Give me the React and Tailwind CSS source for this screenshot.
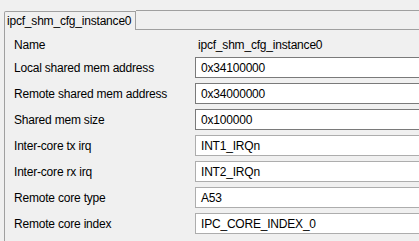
const rows = [
  { label: "Local shared mem address", value: "0x34100000", edit: true },
  { label: "Remote shared mem address", value: "0x34000000", edit: true },
  { label: "Shared mem size", value: "0x100000", edit: true },
  { label: "Inter-core tx irq", value: "INT1_IRQn" },
  { label: "Inter-core rx irq", value: "INT2_IRQn" },
  { label: "Remote core type", value: "A53" },
  { label: "Remote core index", value: "IPC_CORE_INDEX_0" },
];

export default function App() {
  return (
    <div className="w-[419px] h-[241px] overflow-hidden bg-[#f0f0f0] text-[12px] tracking-[-0.2px] text-black font-['Liberation_Sans',Arial,sans-serif]">
      <div className="pt-[10px] pl-[4px]">
        {/* tab strip */}
        <div className="flex h-[20px]">
          <div className="mt-[1px] w-[132px] h-[19px] flex items-center pl-[2px] border-l border-t border-r border-[#a0a0a0] rounded-tl-[2px] whitespace-nowrap">
            ipcf_shm_cfg_instance0
          </div>
          <div className="flex-1 border-t border-b border-[#a0a0a0]" />
        </div>

        {/* form */}
        <div className="h-[220px] border-l border-[#a0a0a0] pl-[9px] pt-[4px]">
          <div className="flex items-center h-[21px]">
            <div className="w-[181px] shrink-0">Name</div>
            <div className="pl-[3px] whitespace-nowrap">ipcf_shm_cfg_instance0</div>
          </div>
          <div className="flex flex-col gap-[5px] mt-[2px]">
            {rows.map((r) => (
              <div key={r.label} className="flex items-center h-[21px]">
                <div className="w-[181px] shrink-0 whitespace-nowrap">{r.label}</div>
                <div
                  className={`w-[240px] shrink-0 h-[21px] flex items-center pl-[5px] bg-white border whitespace-nowrap ${
                    r.edit ? "border-[#7a7a7a]" : "border-[#adadad]"
                  }`}
                >
                  {r.value}
                </div>
              </div>
            ))}
          </div>
        </div>
      </div>
    </div>
  );
}
